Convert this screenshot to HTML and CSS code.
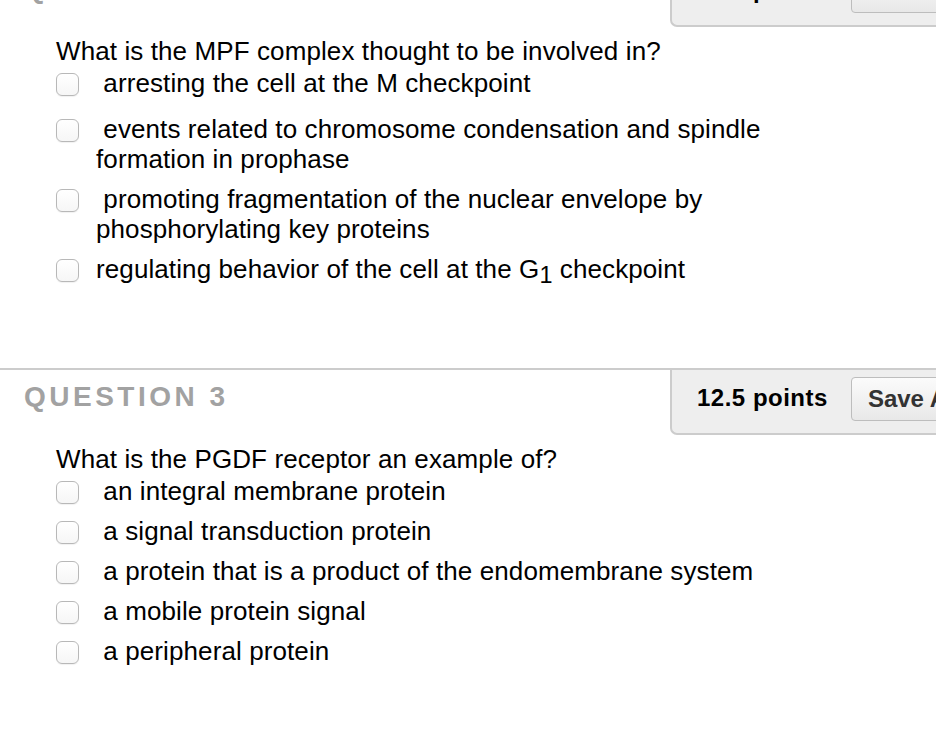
FILE: index.html
```html
<!DOCTYPE html>
<html lang="en">
<head>
<meta charset="utf-8">
<title>Quiz</title>
<link rel="stylesheet" href="styles.css">
</head>
<body>
<div class="page">
  <section class="question">
    <header class="qhead">
      <div class="qtitle">QUESTION 2</div>
      <div class="qbox">
        <span class="points">12.5 points</span>
        <button class="save" type="button">Save Answer</button>
      </div>
    </header>
    <div class="qbody">
      <p class="prompt">What is the MPF complex thought to be involved in?</p>
      <label class="option option-spaced"><span class="box"></span><span class="text">&nbsp;arresting the cell at the M checkpoint</span></label>
      <label class="option"><span class="box"></span><span class="text">&nbsp;events related to chromosome condensation and spindle formation in prophase</span></label>
      <label class="option"><span class="box"></span><span class="text">&nbsp;promoting fragmentation of the nuclear envelope by phosphorylating key proteins</span></label>
      <label class="option"><span class="box"></span><span class="text">regulating behavior of the cell at the G<sub class="sub">1</sub> checkpoint</span></label>
    </div>
  </section>
  <section class="question question-next">
    <header class="qhead">
      <div class="qtitle">QUESTION 3</div>
      <div class="qbox">
        <span class="points">12.5 points</span>
        <button class="save" type="button">Save Answer</button>
      </div>
    </header>
    <div class="qbody">
      <p class="prompt">What is the PGDF receptor an example of?</p>
      <label class="option"><span class="box"></span><span class="text">&nbsp;an integral membrane protein</span></label>
      <label class="option"><span class="box"></span><span class="text">&nbsp;a signal transduction protein</span></label>
      <label class="option"><span class="box"></span><span class="text">&nbsp;a protein that is a product of the endomembrane system</span></label>
      <label class="option"><span class="box"></span><span class="text">&nbsp;a mobile protein signal</span></label>
      <label class="option"><span class="box"></span><span class="text">&nbsp;a peripheral protein</span></label>
    </div>
  </section>
</div>
</body>
</html>
```

FILE: styles.css
```css
html, body {
  margin: 0;
  padding: 0;
  background: #ffffff;
}

body {
  font-family: "Liberation Sans", Arial, Helvetica, sans-serif;
  color: #000;
  width: 936px;
  height: 730px;
  overflow: hidden;
}

.page {
  margin-top: -40px;
  width: 936px;
}

.question-next {
  margin-top: 84px;
}

.qhead {
  display: flex;
  border-top: 2px solid #cccccc;
  overflow: hidden;
  width: 936px;
}

.qtitle {
  flex: 0 0 670px;
  box-sizing: border-box;
  padding: 12px 0 0 24px;
  font-size: 28px;
  line-height: 30px;
  font-weight: bold;
  letter-spacing: 3.5px;
  color: #a2a2a2;
}

.qbox {
  flex: 0 0 320px;
  height: 63px;
  background: #eeeeee;
  border-left: 2px solid #cccccc;
  border-bottom: 2px solid #cccccc;
  border-bottom-left-radius: 7px;
  display: flex;
  align-items: flex-start;
  padding-left: 25px;
  gap: 23px;
}

.points {
  margin-top: 13px;
  font-size: 24px;
  line-height: 30px;
  font-weight: bold;
  letter-spacing: 0.5px;
  white-space: nowrap;
}

.save {
  margin-top: 7px;
  height: 44px;
  padding: 0 16px;
  font-family: inherit;
  font-size: 24px;
  font-weight: bold;
  color: #333333;
  white-space: nowrap;
  background: linear-gradient(#fbfbfb, #e8e8e8);
  border: 1px solid #bdbdbd;
  border-radius: 4px;
  flex-shrink: 0;
}

.qbody {
  padding: 9px 0 0 56px;
}

.prompt {
  margin: 0;
  font-size: 26px;
  line-height: 30px;
  letter-spacing: 0.1px;
}

.option {
  display: flex;
  align-items: flex-start;
  margin-top: 10px;
  font-size: 26px;
  line-height: 30px;
  letter-spacing: 0.1px;
}

.prompt + .option {
  margin-top: 2px;
}

.option-spaced {
  padding-bottom: 6px;
}

.box {
  flex: 0 0 auto;
  width: 21px;
  height: 21px;
  margin-top: 5px;
  border: 1px solid #b8b8b8;
  border-radius: 6px;
  background: linear-gradient(#ffffff, #f6f6f6);
  box-shadow: 0 1px 1px rgba(0, 0, 0, 0.06);
}

.text {
  margin-left: 17px;
  width: 740px;
}

.sub {
  font-size: 0.9em;
  line-height: 0;
  vertical-align: -0.22em;
}
```
